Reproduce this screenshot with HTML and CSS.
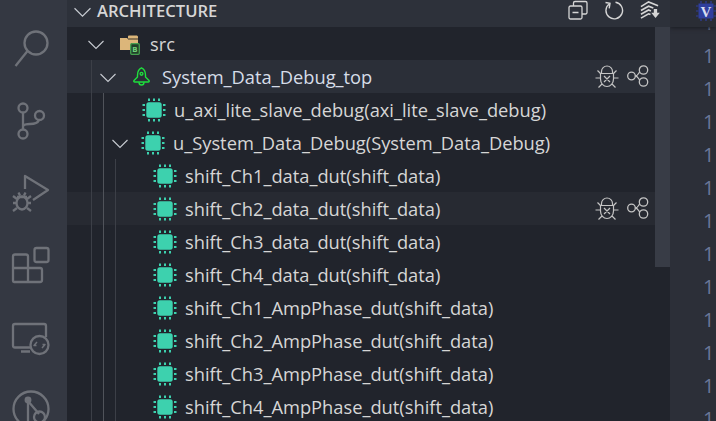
FILE: index.html
```html
<!DOCTYPE html>
<html lang="en">
<head>
<meta charset="utf-8">
<title>Architecture</title>
<link rel="stylesheet" href="styles.css">
</head>
<body>
<svg class="defs" width="0" height="0">
  <defs>
    <symbol id="chev" viewBox="0 0 16 16"><path d="M.5 4l7.500 7.500L15.500 4" fill="none" stroke="currentColor" stroke-width="1.100"/></symbol>
    <symbol id="chip" viewBox="0 0 24 24">
      <rect x="4.300" y="4.300" width="15.400" height="15.400" rx="2.500" fill="#3dd1ae"/>
      <path d="M7 .5V3M12 .5V3M17 .5V3M7 21v2.500M12 21v2.500M17 21v2.500M.5 7H3M.5 12H3M.5 17H3M21 7h2.500M21 12h2.500M21 17h2.500" stroke="#3dd1ae" stroke-width="2" fill="none"/>
    </symbol>
    <symbol id="bug" viewBox="0 0 24 24">
      <g fill="none" stroke="#c4c4c4" stroke-width="1.200">
        <path d="M6.500 9.500V7.500a5.500 5.500 0 0 1 11 0v2"/>
        <path d="M5.500 9.500h13v5.500a6.500 7.500 0 0 1-13 0z"/>
        <path d="M9 12l6 6M15 12l-6 6M5.500 14H.5M18.500 14h5M6 10L2.500 6.500M18 10l3.500-3.500M7 20l-3.500 3.500M17 20l3.500 3.500"/>
      </g>
    </symbol>
    <symbol id="graph" viewBox="0 0 22 22">
      <g fill="none" stroke="#c4c4c4" stroke-width="1.300">
        <circle cx="4.500" cy="11" r="3.800"/>
        <circle cx="16.500" cy="5" r="4.200"/>
        <circle cx="16.500" cy="17" r="4.200"/>
        <path d="M8.300 11c2.500 0 3-2.500 4.400-4M8.300 11c2.500 0 3 2.500 4.400 4"/>
      </g>
    </symbol>
  </defs>
</svg>
<div class="app">
  <nav class="activity">
    <svg class="act" viewBox="0 0 67 421">
      <g fill="none" stroke="currentColor" stroke-width="2.300" stroke-linejoin="round">
        <circle cx="36" cy="43" r="11.500"/>
        <path d="M27.500 51L15.500 66"/>
        <circle cx="23" cy="108" r="4.500"/>
        <circle cx="23" cy="134" r="4.500"/>
        <circle cx="39.500" cy="115.500" r="4.500"/>
        <path d="M23 112.500v17M23 126c1-1.500 3-2 7-2 4.500 0 8-1.500 9-4"/>
        <path d="M25 189v-13l23 14-15 10"/>
        <ellipse cx="22" cy="203" rx="5.500" ry="6.500"/>
        <path d="M13 196l4 3M31 196l-4 3M13 203h4M31 203h-4M13 211l4-3M31 211l-4-3M17 197h10M18.500 192.500l1.500 3M25.500 192.500l-1.500 3"/>
        <rect x="34.500" y="248" width="14" height="14" rx="2"/>
        <path d="M28 268.500v-12a2 2 0 0 0-2-2H15a2 2 0 0 0-2 2V281a1 1 0 0 0 1 1h26a2 2 0 0 0 2-2v-10a2 2 0 0 0-2-2H13M28 268v14"/>
        <path d="M31 347.500H15a2 2 0 0 1-2-2V326a2 2 0 0 1 2-2h29a2 2 0 0 1 2 2v11M21 351.500h9"/>
        <circle cx="39.500" cy="345" r="9"/>
        <path d="M37 342l-3 3.500h2.500M42 348l3-3.500h-2.500" stroke-width="1.500"/>
        <circle cx="31" cy="409" r="17.500"/>
        <circle cx="28" cy="400" r="2.300" fill="currentColor"/>
        <path d="M28 400v21M28 401l11 13"/>
        <circle cx="39.500" cy="417" r="5.500"/>
      </g>
    </svg>
  </nav>
  <section class="panel">
    <header class="head">
      <svg class="head-chev"><use href="#chev"/></svg>
      <span class="title">ARCHITECTURE</span>
      <span class="head-icons">
        <svg class="hicon" viewBox="0 0 20 20"><g fill="none" stroke="#d5d5d5" stroke-width="1.300"><rect x="1" y="6" width="13" height="13" rx="1.500"/><path d="M5.500 6V3a1.500 1.500 0 0 1 1.500-1.500h10.500A1.500 1.500 0 0 1 19 3v9.500a1.500 1.500 0 0 1-1.500 1.500H14M4.500 12.500h6"/></g></svg>
        <svg class="hicon" viewBox="0 0 20 20"><g fill="none" stroke="#d5d5d5" stroke-width="1.400"><path d="M5.500 3.700a8.300 8.300 0 1 0 6-1.400"/><path d="M1.500 2.500l4.500 .8-.8 5"/></g></svg>
        <svg class="hicon" viewBox="0 0 21 20"><g fill="none" stroke="#d5d5d5" stroke-width="1.700"><path d="M1 6.500L9 1.500l10 4M1 10.500l8-4.500 5 2M1 14.500l8-4.500 2.500 1M1 18.500l8-4.500 2 .8"/></g><path d="M14.500 9h3.500v4h2.800l-4.500 5.500-4.500-5.500h2.700z" fill="#d5d5d5"/></svg>
      </span>
    </header>
    <div class="tree">
      <div class="guides">
        <i class="guide g1"></i><i class="guide g2"></i><i class="guide g3"></i>
      </div>
      <div class="row lv0">
        <svg class="chev"><use href="#chev"/></svg>
        <svg class="folder" viewBox="0 0 20 20"><path d="M0 3h7l1 1V1.500a1 1 0 0 1 1-1h8l1 1V8H11v6h-1v1H0z" fill="#dcb67a"/><path d="M8 4h10" stroke="#3a3226" stroke-width="1"/><rect x="10.700" y="8.700" width="8.600" height="10.600" rx="1" fill="#21402a" stroke="#46a04f" stroke-width="1.300"/><text x="15" y="17" class="folder-b">B</text></svg>
        <span class="label">src</span>
      </div>
      <div class="row lv1 selected">
        <svg class="chev"><use href="#chev"/></svg>
        <svg class="rocket" viewBox="0 0 17 19"><g fill="none" stroke="#1ee03c" stroke-width="1.400" stroke-linejoin="round"><path d="M8.500 .8c2.700 1.300 4 4.200 4 7.200v2l3.500 3.500c.5.800 0 1.500-.8 1.500H1.800c-.8 0-1.300-.7-.8-1.500L4.500 10V8c0-3 1.300-5.900 4-7.200z"/><circle cx="8.500" cy="6.800" r="1.400"/><path d="M6 15.200a2.500 2.800 0 0 0 5 0"/></g></svg>
        <span class="label">System_Data_Debug_top</span>
        <span class="actions"><svg class="aicon"><use href="#bug"/></svg><svg class="aicon gicon"><use href="#graph"/></svg></span>
      </div>
      <div class="row lv2 nochev">
        <svg class="chip"><use href="#chip"/></svg>
        <span class="label">u_axi_lite_slave_debug(axi_lite_slave_debug)</span>
      </div>
      <div class="row lv2">
        <svg class="chev"><use href="#chev"/></svg>
        <svg class="chip"><use href="#chip"/></svg>
        <span class="label">u_System_Data_Debug(System_Data_Debug)</span>
      </div>
      <div class="row lv3"><svg class="chip"><use href="#chip"/></svg><span class="label">shift_Ch1_data_dut(shift_data)</span></div>
      <div class="row lv3 hover"><svg class="chip"><use href="#chip"/></svg><span class="label">shift_Ch2_data_dut(shift_data)</span>
        <span class="actions"><svg class="aicon"><use href="#bug"/></svg><svg class="aicon gicon"><use href="#graph"/></svg></span></div>
      <div class="row lv3"><svg class="chip"><use href="#chip"/></svg><span class="label">shift_Ch3_data_dut(shift_data)</span></div>
      <div class="row lv3"><svg class="chip"><use href="#chip"/></svg><span class="label">shift_Ch4_data_dut(shift_data)</span></div>
      <div class="row lv3"><svg class="chip"><use href="#chip"/></svg><span class="label">shift_Ch1_AmpPhase_dut(shift_data)</span></div>
      <div class="row lv3"><svg class="chip"><use href="#chip"/></svg><span class="label">shift_Ch2_AmpPhase_dut(shift_data)</span></div>
      <div class="row lv3"><svg class="chip"><use href="#chip"/></svg><span class="label">shift_Ch3_AmpPhase_dut(shift_data)</span></div>
      <div class="row lv3"><svg class="chip"><use href="#chip"/></svg><span class="label">shift_Ch4_AmpPhase_dut(shift_data)</span></div>
      <div class="scrollbar"></div>
    </div>
  </section>
  <section class="editor">
    <div class="tabs">
      <svg class="vfile" viewBox="0 0 22 22"><rect x="3.500" y="3.500" width="15" height="15" fill="#2f3f9e"/><path d="M1 6h2.500M1 11h2.500M1 16h2.500M18.500 6H21M18.500 11H21M18.500 16H21M6 1v2.500M11 1v2.500M16 1v2.500M6 18.500V21M11 18.500V21M16 18.500V21" stroke="#2f3f9e" stroke-width="1.200"/><text x="11" y="16.500" class="vletter">V</text></svg>
    </div>
    <div class="lines">
      <span>1</span><span>1</span><span>1</span><span>1</span><span>1</span><span>1</span><span>1</span><span>1</span><span>1</span><span>1</span><span>1</span><span>1</span><span>1</span>
    </div>
  </section>
</div>
</body>
</html>
```
FILE: styles.css
```css
* { box-sizing: border-box; }
html, body { margin: 0; padding: 0; width: 716px; height: 421px; overflow: hidden; background: #21242c; }
.defs { position: absolute; }
.app { display: flex; width: 716px; height: 421px; font-family: "Open Sans", "Noto Sans", sans-serif; }

.activity { width: 67px; flex: none; background: #343842; color: #6f7279; overflow: hidden; }
.act { display: block; width: 67px; height: 421px; }

.panel { width: 603px; flex: none; display: flex; flex-direction: column; }
.head { height: 27px; flex: none; display: flex; align-items: center; background: #2d313a; color: #d6d6d6; padding-left: 7px; }
.head-chev { width: 17px; height: 17px; color: #c8ccd2; margin: 0 6px 2px 0; }
.title { font-size: 16.600px; font-weight: 600; line-height: 22px; margin-bottom: 6px; }
.head-icons { margin-left: auto; margin-right: 10px; margin-bottom: 7px; display: flex; gap: 16px; align-items: center; }
.hicon { width: 20px; height: 20px; display: block; }

.tree { flex: 1; position: relative; background: #21242c; overflow: hidden; }
.guides { position: absolute; inset: 0; pointer-events: none; z-index: 2; }
.guide { position: absolute; display: block; width: 1px; background: #3c3f47; }
.g1 { left: 24px; top: 33px; bottom: 0; }
.g2 { left: 36px; top: 66px; bottom: 0; background: #50535a; }
.g3 { left: 48px; top: 132px; bottom: 0; }

.row { height: 33px; display: flex; align-items: center; position: relative; color: #d6d6d6; font-size: 18.300px; white-space: nowrap; }
.row.selected { background: #2b2f38; }
.row.hover { background: #272a32; }
.selected .label { color: #d6dde8; }
.label { line-height: 33px; }
.chev { width: 16px; height: 16px; color: #c8ccd2; flex: none; margin-top: 2px; }
.lv0 { padding-left: 21px; }
.lv0 .chev { margin-right: 16px; }
.folder { width: 20px; height: 20px; margin: 2px 10px 0 0; flex: none; }
.folder-b { font: 700 7px "DejaVu Sans", sans-serif; fill: #6fd07a; text-anchor: middle; }
.lv1 { padding-left: 33px; }
.lv1 .chev { margin-right: 17px; }
.rocket { width: 17px; height: 19px; margin-right: 12px; flex: none; }
.lv2 { padding-left: 45px; }
.lv2 .chev { margin-right: -1px; }
.lv2.nochev { padding-left: 75px; }
.lv3 { padding-left: 86px; }
.chip { width: 24px; height: 24px; margin-right: 8px; flex: none; }
.lv2 .chev + .chip { margin-left: 14px; }
.actions { position: absolute; left: 528px; top: 4px; display: flex; gap: 8px; align-items: center; }
.aicon { width: 24px; height: 24px; display: block; }
.gicon { width: 22px; height: 22px; }
.scrollbar { position: absolute; left: 588px; top: 0; width: 15px; height: 240px; background: #383c46; z-index: 3; }

.editor { flex: 1; background: #2c2f38; display: flex; flex-direction: column; overflow: hidden; }
.tabs { height: 27px; flex: none; background: #2a2d35; box-shadow: 0 1px 4px #1a1c22; position: relative; z-index: 1; padding-left: 25px; }
.vfile { width: 22px; height: 22px; display: block; }
.vletter { font: 700 15px "Liberation Serif", serif; fill: #d8dcf0; text-anchor: middle; }
.lines { flex: 1; min-height: 0; overflow: hidden; display: flex; flex-direction: column; padding-left: 33px; color: #6b7798; font-size: 20px; font-family: "Open Sans", sans-serif; }
.lines span { height: 33px; line-height: 33px; flex: none; }
.lines span:first-child { margin-top: -21px; }
```
